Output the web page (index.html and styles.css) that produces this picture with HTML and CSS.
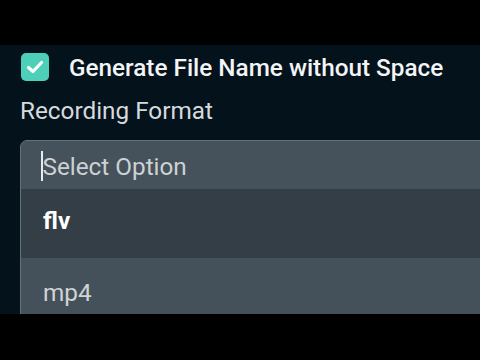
FILE: index.html
```html
<!DOCTYPE html>
<html>
<head>
<meta charset="utf-8">
<link rel="stylesheet" href="styles.css">
</head>
<body>
<div class="bar"></div>
<div class="panel">
  <div class="check-row">
    <span class="checkbox">
      <svg width="18" height="14" viewBox="0 0 18 14"><path d="M2.5 7.5 L7 11.5 L15.5 2.5" fill="none" stroke="#ffffff" stroke-width="3.2" stroke-linecap="round" stroke-linejoin="round"/></svg>
    </span>
    <span class="check-label">Generate File Name without Space</span>
  </div>
  <div class="field-label">Recording Format</div>
  <div class="select">
    <div class="input"><span class="caret"></span>Select Option</div>
    <div class="option active">flv</div>
    <div class="option">mp4</div>
  </div>
</div>
<div class="bar bottom"></div>
</body>
</html>
```
FILE: styles.css
```css
html, body {
  margin: 0;
  padding: 0;
  background: #000;
  width: 480px;
  height: 360px;
  overflow: hidden;
  font-family: Roboto, "Liberation Sans", sans-serif;
}
.bar {
  height: 45px;
  background: #000;
}
.bar.bottom {
  height: 46px;
}
.panel {
  height: 269px;
  background: #04121c;
  padding-left: 20px;
  overflow: hidden;
  box-sizing: border-box;
}
.check-row {
  display: flex;
  align-items: center;
  height: 44px;
}
.checkbox {
  flex: none;
  width: 28px;
  height: 28px;
  margin-left: 1px;
  border-radius: 5px;
  background: #4ecfb9;
  display: flex;
  align-items: center;
  justify-content: center;
}
.check-label {
  margin-left: 20px;
  font-size: 24.3px;
  font-weight: 500;
  color: #f2f4f5;
  white-space: nowrap;
}
.field-label {
  margin-left: 0;
  height: 51px;
  line-height: 44px;
  font-size: 24.3px;
  color: #d6dadd;
}
.select {
  width: 520px;
  border: 1px solid #66727b;
  border-radius: 7px 0 0 0;
  overflow: hidden;
  background: #46525b;
}
.input {
  height: 48px;
  display: flex;
  align-items: center;
  padding-left: 20px;
  padding-top: 2px;
  box-sizing: border-box;
  font-size: 24.3px;
  color: #cdd1d4;
  background: #46525b;
}
.caret {
  width: 1.5px;
  height: 30px;
  background: #e8eaec;
}
.option {
  height: 69px;
  padding-left: 22px;
  display: flex;
  align-items: center;
  font-size: 24.3px;
  color: #cfd3d6;
  background: #45515a;
}
.option.active {
  background: #333e47;
  color: #ffffff;
  font-weight: 700;
  align-items: flex-start;
  padding-top: 17px;
  box-sizing: border-box;
}
```
